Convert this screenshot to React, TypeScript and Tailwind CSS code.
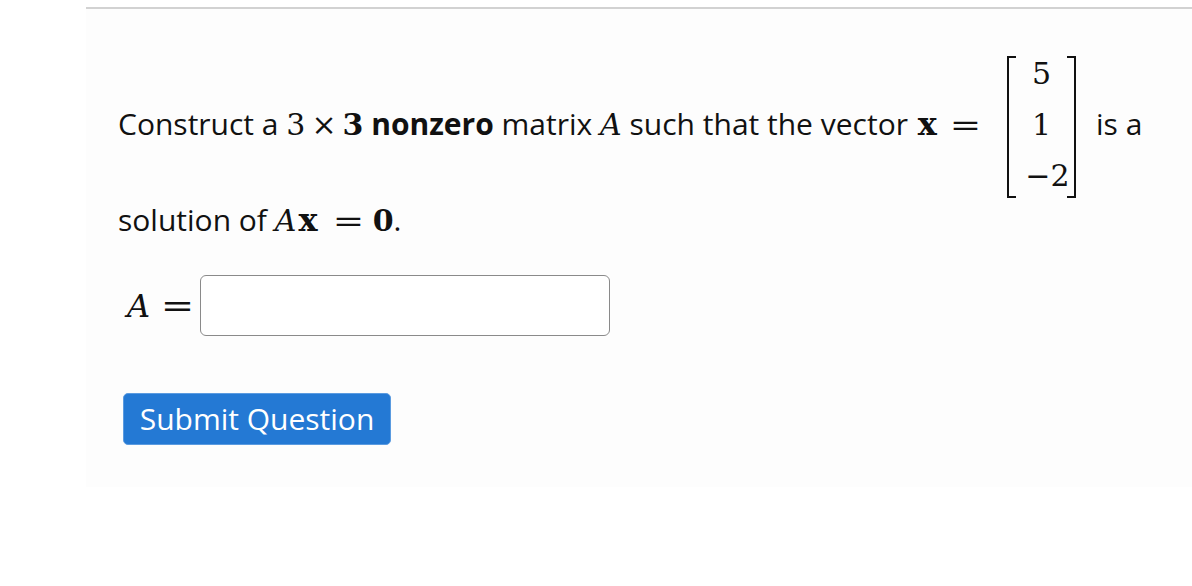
import React from "react";

const MF = "font-['DejaVu_Serif','Liberation_Serif',serif]";

function M({ children, i, b, className = "" }: { children: React.ReactNode; i?: boolean; b?: boolean; className?: string }) {
  return (
    <span className={`${MF} text-[30px] ${i ? "italic" : ""} ${b ? "font-bold" : ""} ${className}`}>{children}</span>
  );
}

function Eq({ className = "" }: { className?: string }) {
  return <span className={`inline-block ${MF} text-[30px] font-light scale-x-[1.25] ${className}`}>=</span>;
}

function Matrix() {
  return (
    <span className="inline-flex align-middle h-[142px] items-stretch ml-[29px] mr-[20px]">
      <span className="w-[9px] border-l-[2.5px] border-t-[2px] border-b-[2px] border-[#111]" />
      <span className={`flex flex-col w-[51px] -mt-[8px] ${MF} text-[30px]`}>
        <span className="h-[51px] leading-[51px] text-center">5</span>
        <span className="h-[51px] leading-[51px] text-center">1</span>
        <span className="h-[51px] leading-[51px] text-center translate-x-[6px] whitespace-nowrap">−2</span>
      </span>
      <span className="w-[9px] border-r-[2.5px] border-t-[2px] border-b-[2px] border-[#111]" />
    </span>
  );
}

export default function App() {
  return (
    <div className="w-[1192px] h-[586px] bg-white overflow-hidden font-['Open_Sans','Noto_Sans',sans-serif] text-[#111]">
      <div className="ml-[86px] mt-[7px] h-[2px] bg-[#d2d2d2]" />
      <div className="ml-[86px] h-[478px] bg-[#fdfdfd] pt-[47px] pl-[32px]">
        <div className="text-[30px] leading-[40px] whitespace-nowrap">
          Construct a <M>3</M>
          <M className="mx-[6px]">×</M>
          <M b>3</M> <b className="font-bold">nonzero</b> matrix <M i>A</M> such that the vector{" "}
          <M b className="text-[32px] ml-[2px]">x</M>
          <Eq className="ml-[16px]" />
          <Matrix />
          is a
        </div>
        <div className="mt-[2px] text-[30px] leading-[40px] whitespace-nowrap">
          solution of <M i>A</M>
          <M b className="text-[32px] ml-[2px]">x</M>
          <Eq className="ml-[18px] mr-[12px]" />
          <M b>0</M>.
        </div>
        <div className="mt-[34px] ml-[9px] flex items-center h-[61px]">
          <span className={`flex items-center gap-[14px] mr-[9px] ${MF} text-[32px]`}>
            <span className="italic">A</span>
            <span className="inline-block font-light scale-x-[1.25]">=</span>
          </span>
          <div className="w-[410px] h-[61px] border-[1.5px] border-[#8a8a8a] rounded-[6px] bg-white" />
        </div>
        <button className="mt-[57px] ml-[5px] w-[268px] h-[52px] rounded-[5px] bg-[#2479d4] border border-[#5b9be0] text-white text-[30px] leading-[40px] flex items-center justify-center">
          Submit Question
        </button>
      </div>
    </div>
  );
}
